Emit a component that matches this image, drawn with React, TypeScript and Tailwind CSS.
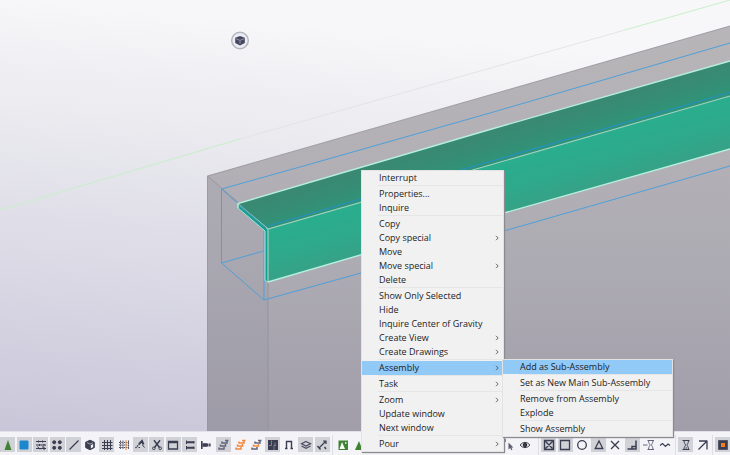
import type { ReactNode } from "react";
import clsx from "clsx";

interface MenuEntry {
  label: string;
  submenu?: boolean;
  active?: boolean;
}

interface Tool {
  label: string;
  pressed?: boolean;
  icon: ReactNode;
}

// Each inner list is a group, groups are divided by a thin line
const contextMenu: MenuEntry[][] = [
  [{ label: "Interrupt" }],
  [{ label: "Properties..." }, { label: "Inquire" }],
  [
    { label: "Copy" },
    { label: "Copy special", submenu: true },
    { label: "Move" },
    { label: "Move special", submenu: true },
    { label: "Delete" },
  ],
  [
    { label: "Show Only Selected" },
    { label: "Hide" },
    { label: "Inquire Center of Gravity" },
    { label: "Create View", submenu: true },
    { label: "Create Drawings", submenu: true },
  ],
  [{ label: "Assembly", submenu: true, active: true }],
  [{ label: "Task", submenu: true }],
  [
    { label: "Zoom", submenu: true },
    { label: "Update window" },
    { label: "Next window" },
  ],
  [{ label: "Pour", submenu: true }],
];

const assemblyMenu: MenuEntry[][] = [
  [{ label: "Add as Sub-Assembly", active: true }],
  [{ label: "Set as New Main Sub-Assembly" }],
  [{ label: "Remove from Assembly" }, { label: "Explode" }],
  [{ label: "Show Assembly" }],
];

const cube = (
  <>
    <path d="M6 1.2 10.3 3.2v5.4L6 10.8 1.7 8.6V3.2z" fill="currentColor" />
    <path d="M6.8 6.2 9.2 5v3.1L6.8 9.4z" fill="#f4f4f8" stroke="none" />
    <path d="M3 3.7 6 5.1l3-1.4" stroke="#d4d4dc" strokeWidth="0.7" />
  </>
);

const hourglass = (
  <path d="M2.5 1.5h7M2.5 10.5h7M4 1.5c0 3 1.5 3.5 1.5 4.5S4 7.5 4 10.5M8.5 1.5c0 3-1.5 3.5-1.5 4.5s1.5 1.5 1.5 4.5M5.5 9h1.5" />
);

// Stacked bent bars, the upper and the lower one coloured apart
function bars(upper: string, lower: string, foot: string) {
  return (
    <g strokeWidth="1.5">
      <path d="M8 1.500h3.500M10 1.500V4H5V2.500" stroke={upper} />
      <path d="M8.500 5V7H3.500V5.500" stroke={lower} />
      <path d="M7 8v2H2V8.500" stroke={foot} />
    </g>
  );
}

const selectionTools: Tool[] = [
  {
    label: "Select all",
    pressed: true,
    icon: <path d="M6 1 9.5 11h-7z" fill="#3f8233" stroke="none" />,
  },
  {
    label: "Select parts",
    pressed: true,
    icon: <path d="M2 2h8v8H2z" fill="#1c87cc" stroke="#1c87cc" />,
  },
  {
    label: "Select surfaces",
    pressed: true,
    icon: (
      <>
        <path d="M1 2.500h10M1 6h10M1 9.500h10" />
        <path d="M3.500 1.500v2M7.500 1.500v2M4.500 5v2M9 5v2M2.500 7.500l2.500 3M7 8h2v3" />
      </>
    ),
  },
  {
    label: "Select points",
    pressed: true,
    icon: (
      <g fill="currentColor">
        <circle cx="3.200" cy="3.200" r="1.500" />
        <circle cx="8.800" cy="3.200" r="1.500" />
        <circle cx="3.200" cy="8.800" r="1.500" />
        <circle cx="8.800" cy="8.800" r="1.500" />
      </g>
    ),
  },
  { label: "Select lines", pressed: true, icon: <path d="M1.500 10.500l9-9" strokeWidth="1.200" /> },
  { label: "Select reference models", icon: cube },
  {
    label: "Select grids",
    pressed: true,
    icon: <path d="M3.500 1v10M6.500 1v10M9.500 1v10M1 3.500h10.500M1 6.500h10.500M1 9.500h10.500" />,
  },
  {
    label: "Select grid line",
    icon: (
      <>
        <path
          d="M2.500 1.500v9M5 1.500v9M10.500 1.500v9M1 3.500h10M1 6h10M1 8.500h10"
          strokeDasharray="1.500 0.800"
          strokeWidth="0.900"
        />
        <path d="M8 1v10" stroke="#ee8136" />
      </>
    ),
  },
  {
    label: "Select welds",
    pressed: true,
    icon: (
      <>
        <path d="M1.500 9 5.500 5" strokeWidth="1.300" strokeDasharray="1.500 0.700" />
        <path d="M5 5 8 2l1.500 3.500" strokeWidth="2" />
        <path d="M4.500 8.500h1.500M8.500 6l2 2.500" />
      </>
    ),
  },
  {
    label: "Select cuts and fittings",
    pressed: true,
    icon: (
      <>
        <path d="M3 1.200 8.500 8.500M9 1.200 3.500 8.500" strokeWidth="1.500" />
        <circle cx="2.800" cy="9.300" r="1.300" />
        <circle cx="9.200" cy="9.300" r="1.300" />
      </>
    ),
  },
  {
    label: "Select views",
    pressed: true,
    icon: <path d="M1.500 2.500h9v7.500h-9zM1.500 3.500h9" strokeWidth="1.300" />,
  },
  {
    label: "Select bolts",
    pressed: true,
    icon: (
      <>
        <path d="M2.500 1.500v3.500M2.500 7v3.500M10 2v2.500M10 7.500v2.500" />
        <path d="M2.500 3.200h7.500M2.500 8.800h7.500" strokeWidth="2" />
      </>
    ),
  },
  {
    label: "Select single bolts",
    icon: (
      <>
        <path d="M1.800 2v8" strokeWidth="1.600" />
        <path d="M2.500 6H7" strokeWidth="3.600" />
        <path d="M7 6h4" strokeWidth="2.800" strokeDasharray="1.200 0.500" />
      </>
    ),
  },
  {
    label: "Select reinforcing bars",
    pressed: true,
    icon: bars("#62647a", "#62647a", "#62647a"),
  },
  { label: "Select bar groups", icon: bars("#f0883c", "#f0883c", "#f0883c") },
  { label: "Select single bar", icon: bars("#62647a", "#f0883c", "#62647a") },
  {
    label: "Select pour objects",
    pressed: true,
    icon: (
      <>
        <path d="M1 1h10v10H1z" fill="currentColor" stroke="none" />
        <path d="M4.500 1.500v5H2M7 11V6.500h2M8 3.500v3" stroke="#9a9ca8" strokeWidth="0.700" />
      </>
    ),
  },
  {
    label: "Select pour breaks",
    icon: <path d="M3.500 9.500V2.500h5v7M2 9.500h2.500M7.500 9.500h2.500" strokeWidth="1.400" />,
  },
  {
    label: "Select planes",
    pressed: true,
    icon: <path d="M6 2.500 10.500 4.700 6 7 1.500 4.700zM1.500 7 6 9.300 10.500 7" stroke="#4b4d60" strokeWidth="1.200" />,
  },
  {
    label: "Select distances",
    pressed: true,
    icon: (
      <>
        <path d="M3 9 9.500 2.500M7 2h3v3" strokeWidth="1.200" />
        <path d="M1.500 7l3 3.500M8.500 8l1.500 2" strokeWidth="1.400" />
      </>
    ),
  },
];

const snapTools: Tool[] = [
  {
    label: "Snap to points",
    pressed: true,
    icon: <path d="M1.500 1.500h9v9h-9zM2.500 2.500l7 7M9.500 2.500l-7 7" strokeWidth="1.400" />,
  },
  {
    label: "Snap to end points",
    pressed: true,
    icon: <path d="M1.500 1.500h9v9h-9z" strokeWidth="1.300" />,
  },
  {
    label: "Snap to center points",
    icon: <circle cx="6" cy="6" r="4.300" strokeWidth="1.300" />,
  },
  {
    label: "Snap to midpoints",
    pressed: true,
    icon: <path d="M6 2 9.800 9.500H2.200z" strokeWidth="1.300" />,
  },
  { label: "Snap to intersections", icon: <path d="M2 2l8 8M10 2l-8 8" strokeWidth="1.300" /> },
  {
    label: "Snap to perpendicular",
    pressed: true,
    icon: <path d="M10 1.500v8.500H1.500M6 10V7.500h4" strokeWidth="1.500" />,
  },
  {
    label: "Snap to line extensions",
    icon: (
      <g className="text-[#62647a]">
        <path d="M0 6h4.500" />
        <path d="M4.500 1.500H11M4.500 10.500H11M5.500 1.500c0 3 1.500 3.500 1.500 4.500s-1.500 1.500-1.500 4.500M10 1.500c0 3-1.500 3.500-1.500 4.500s1.500 1.500 1.500 4.500" />
      </g>
    ),
  },
  { label: "Snap to free positions", icon: <path d="M1 6.500l2.500-2 3 3L9 5l2 1.500" strokeWidth="1.200" /> },
];

const lineTools: Tool[] = [
  { label: "Snap to reference lines", pressed: true, icon: hourglass },
  { label: "Snap to geometry lines", icon: <path d="M2 2h8.500M10 2v8.500M9.500 2.500l-8 8" strokeWidth="1.300" /> },
];

function Icon({ children }: { children: ReactNode }) {
  return (
    <svg viewBox="0 0 12 12" className="size-3" fill="none" stroke="currentColor" aria-hidden="true">
      {children}
    </svg>
  );
}

function ToolButton({ tool }: { tool: Tool }) {
  return (
    <button
      type="button"
      aria-label={tool.label}
      aria-pressed={!!tool.pressed}
      className={clsx(
        "flex size-[15px] shrink-0 items-center justify-center text-[#3b3d50]",
        tool.pressed && "bg-[#d1d2d8]"
      )}
    >
      <Icon>{tool.icon}</Icon>
    </button>
  );
}

function ToolGroup({ tools, className }: { tools: Tool[]; className?: string }) {
  return (
    <div className={clsx("flex shrink-0 justify-between", className)}>
      {tools.map((tool) => (
        <ToolButton key={tool.label} tool={tool} />
      ))}
    </div>
  );
}

function Divider() {
  return <div className="h-5 w-px shrink-0 bg-[#dedfe5]" />;
}

function Menu({ groups, label }: { groups: MenuEntry[][]; label: string }) {
  return (
    <div
      role="menu"
      aria-label={label}
      className="border border-[#e3e3e3] bg-[#f1f1f1] shadow-[1px_1px_1px_#8a8a90]"
    >
      {groups.map((group, i) => (
        <div key={i} role="group">
          {i > 0 && (
            <div className="h-[2px] pl-4">
              <div className="h-px bg-[#e6e6e6]" />
            </div>
          )}
          {group.map((entry) => (
            <button
              key={entry.label}
              type="button"
              role="menuitem"
              aria-haspopup={entry.submenu ? "menu" : undefined}
              className={clsx(
                "flex h-[14px] w-full items-center justify-between pl-[17px] pr-1 text-left",
                entry.active && "bg-[#91c9f7]"
              )}
            >
              <span className="whitespace-nowrap">{entry.label}</span>
              {entry.submenu && (
                <svg viewBox="0 0 4 6" className="h-[6px] w-1" fill="none" stroke="#444" strokeWidth="0.8">
                  <path d="M1 .800 3.200 3 1 5.200" />
                </svg>
              )}
            </button>
          ))}
        </div>
      ))}
    </div>
  );
}

function ModelView() {
  return (
    <svg
      viewBox="0 0 730 431"
      preserveAspectRatio="xMinYMin slice"
      className="block h-full w-full"
      fill="none"
      role="img"
      aria-label="3D model view"
    >
      <defs>
        <linearGradient id="sky" gradientUnits="userSpaceOnUse" x1="40" y1="0" x2="0" y2="431">
          <stop offset="0" stopColor="#f7f7f9" />
          <stop offset="0.25" stopColor="#ebebf0" />
          <stop offset="1" stopColor="#c9c6d9" />
        </linearGradient>
        <linearGradient id="concrete" gradientUnits="userSpaceOnUse" x1="0" y1="30" x2="0" y2="431">
          <stop offset="0" stopColor="#b8b5b8" />
          <stop offset="0.5" stopColor="#afadb4" />
          <stop offset="1" stopColor="#a19eaa" />
        </linearGradient>
        <linearGradient id="flangeTop" gradientUnits="userSpaceOnUse" x1="480" y1="131" x2="491" y2="168">
          <stop offset="0" stopColor="#3a8872" />
          <stop offset="0.4" stopColor="#378b74" />
          <stop offset="1" stopColor="#2d9678" />
        </linearGradient>
        <linearGradient id="flangeFront" gradientUnits="userSpaceOnUse" x1="480" y1="168" x2="495" y2="220">
          <stop offset="0" stopColor="#29ae8d" />
          <stop offset="0.5" stopColor="#2ea98b" />
          <stop offset="1" stopColor="#38a087" />
        </linearGradient>
      </defs>

      <path d="M0 0H730V431H0z" fill="url(#sky)" />

      {/* Work plane axis */}
      <path d="M0 210 240 139M625 30 730 0" stroke="#c6efc8" />
      <path d="M240 139 625 30" stroke="#e3e4e6" />

      {/* Concrete wall */}
      <path d="M207.500 176 730 26V431H207.500z" fill="url(#concrete)" />
      <path d="M207.500 176 268 228V431H207.500z" fill="#8f8f9e" fillOpacity="0.120" />
      <path d="M207.500 431V176L730 26" stroke="#929197" strokeWidth="0.800" />
      <path d="M207.500 176 268 228V431" stroke="#929099" strokeWidth="0.800" />

      {/* Bounding box behind the profile */}
      <path
        d="M221.500 189 307 165 490 113 730 43M221.500 189V263L264 300V230M221.500 189l17 15M221.500 263l42-12M264 300 361 273 504 231 730 166"
        stroke="#4f9fd9"
      />

      {/* Steel angle */}
      <path d="M238 203.500 490 129.500 730 61V96L490 165 268 229z" fill="url(#flangeTop)" />
      <path d="M268 229 490 165 730 96V149L504 213 268 282z" fill="url(#flangeFront)" />
      <path d="M238 204v4l27 23v50l3 1v-53z" fill="#179d91" />
      <path d="M238 208l27 23v49.500l3 1.500" stroke="#a8e4d2" />
      <path d="M238 204 268 229 490 165 730 96M268 229v53" stroke="#9fd0be" strokeWidth="1.200" />
      <path d="M268 226 361 199 490 161.500 730 92.500" stroke="#2790c4" strokeWidth="1.200" />
      <path d="M238 208v-4.500L490 129.500 730 61M268 282 504 213 730 149" stroke="#b5efdd" strokeWidth="1.400" />
      <path d="M239 205 266 228" stroke="#2e92bd" />

      {/* Mini toolbar handle */}
      <circle cx="240" cy="40.500" r="8.300" fill="#ececf2" stroke="#b3b3be" strokeWidth="1.400" />
      <path d="M240 36l4.800 1.800v5.200L240 45.500 235.200 43v-5.200z" fill="#454860" />
      <path d="M236 38.800l4 1.500 4-1.500M240 40.300v3.500" stroke="#a0a2b2" strokeWidth="0.800" />
    </svg>
  );
}

export default function App() {
  return (
    <div className="relative flex h-screen flex-col overflow-hidden bg-[#f4f4f8] font-['Open_Sans','Noto_Sans',sans-serif] text-[9px] leading-[14px] text-[#1c1c1c]">
      <main className="min-h-0 flex-1">
        <ModelView />
      </main>

      <footer className="flex h-6 shrink-0 items-center border-t border-[#e2e1ea] pt-[2px]">
        <ToolGroup tools={selectionTools} className="w-[330px]" />
        <div className="flex shrink-0 items-center gap-[2px] pl-[2px]">
          <Divider />
          <button type="button" aria-label="Select assemblies" className="flex size-[15px] items-center justify-center">
            <Icon>
              <path d="M1.500 1.500h9.500v9.500H1.500z" fill="#3f8233" stroke="none" />
              <path d="M5 3 8 10H2.500z" fill="#fff" stroke="none" />
              <path d="M8 4h1.500" stroke="#fff" strokeWidth="1.500" />
            </Icon>
          </button>
          <button type="button" aria-label="Select objects in assemblies" className="flex size-[15px] items-center justify-center">
            <Icon>
              <path d="M5 2 8.500 11H1z" fill="#3f8233" stroke="none" />
              <path d="M8 2.500h3" stroke="#3b3d50" strokeWidth="1.500" />
            </Icon>
          </button>
        </div>

        <div className="ml-auto flex shrink-0 items-center">
          <div className="flex pr-[6px]">
            <button type="button" aria-label="Selection filter" className="flex size-[15px] items-center justify-center">
              <Icon>
                <path d="M0 0h2v3H0z" fill="#16a3dc" stroke="none" />
                <path d="M4.500 3.500v7l1.700-1.500 1.200 2.300 1-.5-1-2.200h2z" fill="#5b5d6e" stroke="none" />
              </Icon>
            </button>
            <button type="button" aria-label="Visibility" className="flex size-[15px] items-center justify-center">
              <Icon>
                <path d="M1.200 6C3.500 2.500 8.500 2.500 10.800 6 8.500 9.500 3.500 9.500 1.200 6z" stroke="#3b3d50" />
                <circle cx="6" cy="6" r="1.800" fill="#3b3d50" />
              </Icon>
            </button>
          </div>
          <Divider />
          <ToolGroup tools={snapTools} className="ml-[2px] w-[132px]" />
          <div className="flex items-center gap-[2px] pl-[2px]">
            <Divider />
            <ToolGroup tools={lineTools} className="w-8" />
            <Divider />
            <button
              type="button"
              aria-label="Snap to grid"
              aria-pressed="true"
              className="flex size-[15px] items-center justify-center bg-[#d1d2d8]"
            >
              <Icon>
                <path d="M1.500 1.500h9v9h-9z" fill="#3b3d50" stroke="#55576a" />
                <path d="M4 4h4v4H4z" fill="#f07f1c" stroke="none" />
              </Icon>
            </button>
          </div>
        </div>
      </footer>

      {/* Context menu and its open submenu float over the view */}
      <div className="absolute left-[361px] top-[170px] w-[143px]">
        <Menu groups={contextMenu} label="Context menu" />
      </div>
      <div className="absolute left-[502px] top-[359px] w-[171px]">
        <Menu groups={assemblyMenu} label="Assembly" />
      </div>
    </div>
  );
}
